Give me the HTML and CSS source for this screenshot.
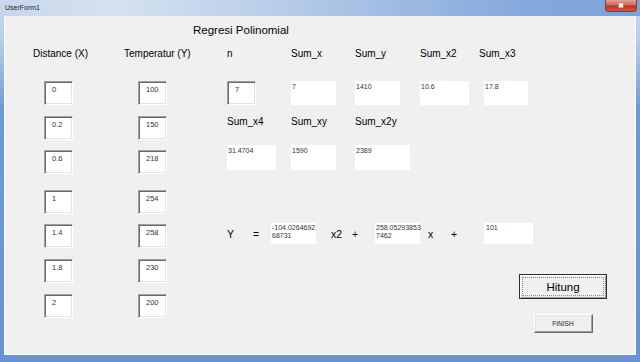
FILE: index.html
```html
<!DOCTYPE html>
<html>
<head>
    <title>UserForm1</title>
    <meta charset="UTF-8">
    <link rel="stylesheet" href="styles.css">
</head>
<body>

<div class="window">
    <div class="titlebar">
        <span class="caption">UserForm1</span>
        <span class="close">&#10006;</span>
    </div>

    <div class="client">
        <div class="form-title">Regresi Polinomial</div>

        <div class="main">
            <div class="col col-x">
                <div class="label">Distance (X)</div>
                <div class="box sunken">0</div>
                <div class="box sunken">0.2</div>
                <div class="box sunken b3">0.6</div>
                <div class="box sunken b4">1</div>
                <div class="box sunken b5">1.4</div>
                <div class="box sunken">1.8</div>
                <div class="box sunken">2</div>
            </div>

            <div class="col col-y">
                <div class="label">Temperatur (Y)</div>
                <div class="box sunken">100</div>
                <div class="box sunken">150</div>
                <div class="box sunken b3">218</div>
                <div class="box sunken b4">254</div>
                <div class="box sunken b5">258</div>
                <div class="box sunken">230</div>
                <div class="box sunken">200</div>
            </div>

            <div class="panel">
                <div class="sums">
                    <div class="label">n</div>
                    <div class="label">Sum_x</div>
                    <div class="label">Sum_y</div>
                    <div class="label">Sum_x2</div>
                    <div class="label shift">Sum_x3</div>

                    <div class="box sunken row1">7</div>
                    <div class="flat row1 w45">7</div>
                    <div class="flat row1 w45">1410</div>
                    <div class="flat row1 w49">10.6</div>
                    <div class="flat row1 w44">17.8</div>

                    <div class="label row2l">Sum_x4</div>
                    <div class="label row2l">Sum_xy</div>
                    <div class="label row2l">Sum_x2y</div>
                    <div></div>
                    <div></div>

                    <div class="flat row2 w49">31.4704</div>
                    <div class="flat row2 w45">1590</div>
                    <div class="flat row2 w55">2389</div>
                </div>

                <div class="equation">
                    <span class="sym s-y">Y</span>
                    <span class="sym s-eq">=</span>
                    <div class="flat coef">-104.0264692<br>68731</div>
                    <span class="sym s-x2">x2</span>
                    <span class="sym s-plus1">+</span>
                    <div class="flat coef">258.05293853<br>7462</div>
                    <span class="sym s-x">x</span>
                    <span class="sym s-plus2">+</span>
                    <div class="flat coef coef-wide">101</div>
                </div>

                <div class="buttons">
                    <button class="btn btn-default"><span class="focus">Hitung</span></button>
                    <button class="btn btn-small">FINISH</button>
                </div>
            </div>
        </div>
    </div>
</div>

</body>
</html>
```

FILE: styles.css
```css
body {
    margin: 0;
    font-family: "Liberation Sans", Arial, sans-serif;
    background: #ffffff;
}

.window {
    width: 640px;
    height: 362px;
    box-sizing: border-box;
    padding: 0 4px 7px 4px;
    display: flex;
    flex-direction: column;
    background: linear-gradient(180deg, #c9d9ee 0, #b7cdea 40px, #6d99d5 110px, #6893d0 100%);
}

.titlebar {
    height: 16px;
    margin: 0 -4px;
    padding: 0 3px 0 5px;
    display: flex;
    align-items: flex-start;
    justify-content: space-between;
    background: linear-gradient(90deg, #c8d7ec 0%, #d5e1f1 18%, #bcd0ea 40%, #9ebbe2 62%, #85a9dc 82%, #7ba2d9 100%);
}

.caption {
    font-size: 7px;
    line-height: 15px;
    color: #1b1b1b;
}

.close {
    width: 30px;
    height: 11px;
    border: 1px solid #8a3a36;
    border-top: 0;
    border-radius: 0 0 4px 4px;
    background: linear-gradient(180deg, #e3a095 0, #d2675a 45%, #b93222 55%, #cf5a45 100%);
    color: #ffffff;
    font-size: 7px;
    line-height: 11px;
    text-align: center;
    font-weight: bold;
}

.client {
    flex: 1;
    background: #f0f0f0;
    border: 1px solid #fbfbfb;
    border-top: 0;
    padding-top: 7px;
}

.form-title {
    margin-left: 188px;
    font-size: 11.5px;
    line-height: 14px;
    color: #000000;
}

.main {
    display: flex;
    margin-top: 11px;
}

.label {
    font-size: 10px;
    line-height: 12px;
    color: #000000;
    white-space: nowrap;
}

.col {
    display: flex;
    flex-direction: column;
}

.col-x {
    width: 91px;
    margin-left: 28px;
}

.col-x .box {
    margin-left: 11px;
}

.col-y {
    width: 103px;
}

.col-y .box {
    margin-left: 14px;
}

.box {
    width: 29px;
    height: 24px;
    box-sizing: border-box;
    margin-top: 11px;
    background: #ffffff;
    font-size: 7.5px;
    line-height: 9px;
    color: #333333;
}

.col .label + .box {
    margin-top: 21px;
}

.col .b3 {
    margin-top: 10px;
}

.col .b4 {
    margin-top: 16px;
}

.col .b5 {
    margin-top: 10px;
}

.sunken {
    padding: 3px 0 0 7px;
    border-top: 1px solid #a0a0a0;
    border-left: 1px solid #a0a0a0;
    border-right: 1px solid #ffffff;
    border-bottom: 1px solid #ffffff;
    box-shadow: inset 1px 1px #696969, inset -1px -1px #e3e3e3;
}

.flat {
    height: 24px;
    box-sizing: border-box;
    padding: 2px 0 0 1px;
    background: #ffffff;
    font-size: 7px;
    line-height: 8px;
    color: #333333;
}

.w44 { width: 44px; }
.w45 { width: 45px; }
.w49 { width: 49px; }
.w55 { width: 55px; }

.panel {
    display: flex;
    flex-direction: column;
}

.sums {
    display: grid;
    grid-template-columns: 64px 64px 65px 64px 60px;
    align-items: start;
}

.sums .shift {
    margin-left: -5px;
}

.sums .row1 {
    margin-top: 21px;
}

.sums .box.row1 {
    margin-top: 21px;
}

.sums .row2l {
    margin-top: 11px;
}

.sums .row2 {
    margin-top: 17px;
    height: 25px;
}

.equation {
    display: flex;
    align-items: center;
    margin-top: 53px;
    height: 21px;
}

.sym {
    font-size: 10.5px;
    line-height: 12px;
    color: #000000;
}

.s-y { width: 26px; }
.s-eq { width: 18px; }
.s-x2 { width: 21px; margin-left: 15px; }
.s-plus1 { width: 23px; }
.s-x { width: 23px; margin-left: 8px; }
.s-plus2 { width: 33px; }

.coef {
    width: 45px;
    height: 21px;
    padding: 1px 0 0 1px;
    flex-shrink: 0;
}

.coef-wide {
    width: 49px;
    padding-left: 2px;
}

.buttons {
    display: flex;
    flex-direction: column;
    align-items: center;
    width: 88px;
    margin-left: 292px;
    margin-top: 30px;
}

.btn {
    box-sizing: border-box;
    margin: 0;
    font-family: "Liberation Sans", Arial, sans-serif;
    color: #000000;
    background: #f0f0f0;
    cursor: default;
}

.btn-default {
    width: 88px;
    height: 25px;
    padding: 2px;
    border: 1px solid #2b2b2b;
    box-shadow: inset 1px 1px #ffffff, inset -1px -1px #a0a0a0;
    font-size: 11.5px;
}

.btn-default .focus {
    display: flex;
    align-items: center;
    justify-content: center;
    height: 100%;
    border: 1px dotted #8a8a8a;
    box-sizing: border-box;
}

.btn-small {
    width: 59px;
    height: 19px;
    margin-top: 15px;
    padding: 0;
    border-top: 1px solid #ffffff;
    border-left: 1px solid #ffffff;
    border-right: 1px solid #696969;
    border-bottom: 1px solid #696969;
    box-shadow: inset -1px -1px #a0a0a0, inset 1px 1px #e3e3e3;
    font-size: 6.5px;
    color: #222222;
}
```
